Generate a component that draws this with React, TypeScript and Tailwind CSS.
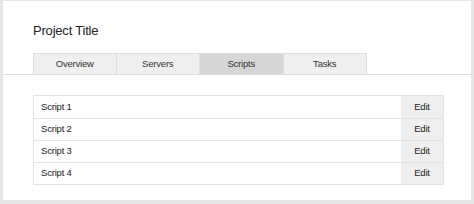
const TABS = ['Overview', 'Servers', 'Scripts', 'Tasks']
const SCRIPTS = ['Script 1', 'Script 2', 'Script 3', 'Script 4']

export default function App() {
  const active = 'Scripts'
  return (
    <div
      className="w-[474px] h-[204px] bg-[#e6e6e6] pl-[3px] pr-[3px] pb-[4px] pt-px"
      style={{ fontFamily: '"Liberation Sans", Arial, sans-serif' }}
    >
      <div className="h-full bg-white flex flex-col">
        <div className="border-b border-[#dcdcdc] pl-[30px] pt-[22px]">
          <h1 className="text-[13px] leading-[16px] tracking-[-0.2px] text-[#222]">Project Title</h1>
          <div className="flex mt-[14px]">
            {TABS.map(t => (
              <div
                key={t}
                className={
                  'w-[83.5px] h-[21px] flex items-center justify-center text-[9.5px] tracking-[-0.2px] text-[#333] border-t border-r border-[#dedede] first:border-l ' +
                  (t === active ? 'bg-[#d6d6d6]' : 'bg-[#efefef]')
                }
              >
                {t}
              </div>
            ))}
          </div>
        </div>

        <div className="pl-[30px] pt-[20px]">
          <div className="w-[411px] border border-[#e2e2e2]">
            {SCRIPTS.map((s, i) => (
              <div
                key={s}
                className={'flex h-[22px] ' + (i > 0 ? 'border-t border-[#e2e2e2]' : '')}
              >
                <div className="flex-1 flex items-center pl-[7px] text-[9.5px] tracking-[-0.2px] text-[#222]">{s}</div>
                <div className="w-[42px] bg-[#efefef] flex items-center justify-center text-[9.5px] tracking-[-0.2px] text-[#222]">
                  Edit
                </div>
              </div>
            ))}
          </div>
        </div>
      </div>
    </div>
  )
}
